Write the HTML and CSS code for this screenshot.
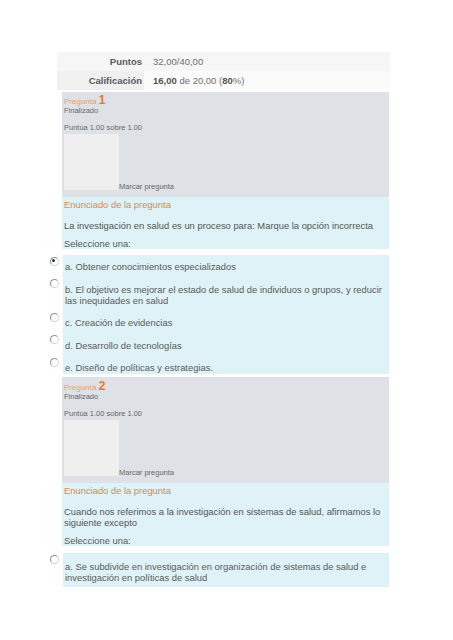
FILE: index.html
```html
<!DOCTYPE html>
<html lang="es">
<head>
<meta charset="utf-8">
<link rel="stylesheet" href="styles.css">
</head>
<body>
<div class="page">
  <table class="summary">
    <tr class="r1"><th>Puntos</th><td>32,00/40,00</td></tr>
    <tr class="r2"><th>Calificación</th><td><b>16,00</b> de 20,00 (<b>80</b>%)</td></tr>
  </table>

  <div class="que">
    <div class="info">
      <div class="qno">Pregunta <span class="num">1</span></div>
      <div class="state">Finalizado</div>
      <div class="grade">Puntúa 1.00 sobre 1.00</div>
      <div class="flagrow"><div class="flagbox"></div><span class="flagtxt">Marcar pregunta</span></div>
    </div>
    <div class="formulation">
      <div class="enun">Enunciado de la pregunta</div>
      <div class="qtext">La investigación en salud es un proceso para: Marque la opción incorrecta</div>
      <div class="prompt">Seleccione una:</div>
    </div>
    <div class="answers">
      <div class="ans first"><span class="radio checked"></span><div class="atext">a. Obtener conocimientos especializados</div></div>
      <div class="ans"><span class="radio"></span><div class="atext">b. El objetivo es mejorar el estado de salud de individuos o grupos, y reducir las inequidades en salud</div></div>
      <div class="ans"><span class="radio"></span><div class="atext">c. Creación de evidencias</div></div>
      <div class="ans"><span class="radio"></span><div class="atext">d. Desarrollo de tecnologías</div></div>
      <div class="ans last"><span class="radio"></span><div class="atext">e. Diseño de políticas y estrategias.</div></div>
    </div>
  </div>

  <div class="que q2">
    <div class="info">
      <div class="qno">Pregunta <span class="num">2</span></div>
      <div class="state">Finalizado</div>
      <div class="grade">Puntúa 1.00 sobre 1.00</div>
      <div class="flagrow"><div class="flagbox"></div><span class="flagtxt">Marcar pregunta</span></div>
    </div>
    <div class="formulation">
      <div class="enun">Enunciado de la pregunta</div>
      <div class="qtext">Cuando nos referimos a la investigación en sistemas de salud, afirmamos lo siguiente excepto</div>
      <div class="prompt">Seleccione una:</div>
    </div>
    <div class="answers">
      <div class="ans first single"><span class="radio"></span><div class="atext">a. Se subdivide en investigación en organización de sistemas de salud e investigación en políticas de salud</div></div>
    </div>
  </div>
</div>
</body>
</html>
```
FILE: styles.css
```css
* { box-sizing: border-box; }
html, body { margin: 0; padding: 0; background: #fff; }
body {
  font-family: "Liberation Sans", Arial, sans-serif;
  color: #5a5a5a;
  width: 453px;
  height: 640px;
  overflow: hidden;
}
.page { padding-top: 52px; }

.summary {
  margin-left: 57px;
  width: 333px;
  border-collapse: collapse;
  font-size: 9.5px;
}
.summary th {
  width: 87px;
  text-align: right;
  font-weight: bold;
  color: #5a5a5a;
  padding: 0 2px 0 0;
  height: 19px;
}
.summary td { padding: 0 0 0 9px; color: #707070; }
.summary td b { color: #555; }
.r1 { background: #f6f6f6; }
.r2 th { background: #f0f0f0; }
.r2 td { background: #fbfbfb; }

.que {
  margin-left: 62px;
  width: 327px;
  margin-top: 2px;
  margin-bottom: 3px;
}
.info {
  background: #dee2e6;
  padding: 3px 2px 0;
  font-size: 7.5px;
  color: #666;
  height: 105px;
}
.q2 .info { height: 106px; padding-top: 4px; }
.qno { color: #f29b63; font-size: 8px; line-height: 11px; }
.num { font-weight: bold; font-size: 12px; color: #e8772f; }
.state { line-height: 8px; }
.grade { margin-top: 8px; line-height: 9px; }
.flagrow { display: flex; align-items: flex-end; margin-top: 2px; }
.flagbox { width: 55px; height: 56px; background: #efefef; }
.flagtxt { line-height: 8px; margin-bottom: -1px; }

.formulation {
  background: #def2f7;
  padding: 1px 0 0 2px;
  font-size: 9.4px;
  line-height: 11px;
}
.enun { color: #d98a4c; line-height: 13px; }
.qtext { margin-top: 9px; color: #555; }
.prompt { margin-top: 7px; line-height: 11px; }

.answers {
  margin-top: 6px;
  margin-left: -13px;
  font-size: 9.4px;
  line-height: 11px;
}
.q2 .answers { margin-top: 7px; }
.ans { display: flex; align-items: flex-start; }
.radio {
  flex: 0 0 14px;
  height: 13px;
  background: #fff;
  position: relative;
  margin-top: 2px;
}
.radio::before {
  content: "";
  position: absolute;
  left: 1px; top: 0;
  width: 7px; height: 7px;
  border-radius: 50%;
  border: 1px solid #8f8f8f;
  border-right-color: #d5d5d5;
  border-bottom-color: #d5d5d5;
  background: #fff;
}
.radio.checked::after {
  content: "";
  position: absolute;
  left: 3px; top: 2px;
  width: 3px; height: 3px;
  border-radius: 50%;
  background: #333;
}
.atext {
  flex: 1;
  background: #def2f7;
  padding: 11.5px 0 0 2px;
}
.ans.first .atext { padding-top: 6px; }
.ans.last .atext { padding-bottom: 1px; }
.ans.single .atext { padding-top: 8px; padding-bottom: 4px; }
.ans:not(.first) .radio { margin-top: 7px; }
```
